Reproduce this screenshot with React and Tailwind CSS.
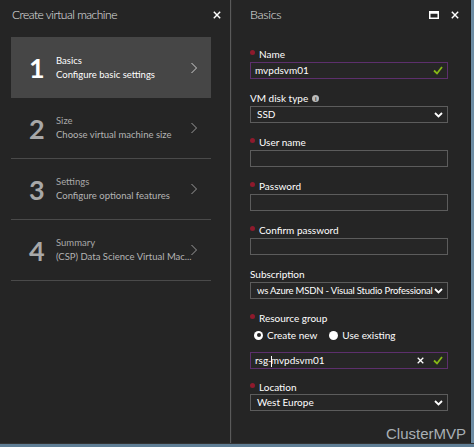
import React from "react";

const F = "font-['Lato',sans-serif]";

function Chevron({ className = "" }) {
  return (
    <svg width="8" height="12" viewBox="0 0 8 12" className={className}>
      <path d="M1.5 1 L6.5 6 L1.5 11" fill="none" stroke="currentColor" strokeWidth="1" />
    </svg>
  );
}

function Close({ size = 9 }) {
  return (
    <svg width={size} height={size} viewBox="0 0 10 10">
      <path d="M1 1 L9 9 M9 1 L1 9" stroke="currentColor" strokeWidth="1.8" />
    </svg>
  );
}

function Check() {
  return (
    <svg width="10" height="9" viewBox="0 0 10 9">
      <path d="M1 4.5 L4 7.5 L9 1" fill="none" stroke="#86b817" strokeWidth="1.8" />
    </svg>
  );
}

function Down() {
  return (
    <svg width="9" height="6" viewBox="0 0 9 6">
      <path d="M1 1 L4.5 4.5 L8 1" fill="none" stroke="#ffffff" strokeWidth="1.8" />
    </svg>
  );
}

function Step({ n, title, sub, active }) {
  return (
    <div
      className={`h-[61px] flex items-center ${
        active ? "bg-[#464646]" : "border-b border-[#4a4a4a]"
      }`}
    >
      <div
        className={`w-[45px] shrink-0 pl-[18px] text-[27px] font-bold leading-none ${
          active ? "text-white" : "text-[#a8a8a8]"
        }`}
      >
        {n}
      </div>
      <div className="flex-1 min-w-0 flex flex-col gap-[2px] whitespace-nowrap">
        <div className={`text-[9.5px] leading-[12px] ${active ? "text-white" : "text-[#a8a8a8]"}`}>{title}</div>
        <div className={`text-[9.5px] leading-[12px] ${active ? "text-white" : "text-[#b4b4b4]"}`}>{sub}</div>
      </div>
      <div className={`shrink-0 pl-[4px] pr-[13px] ${active ? "text-[#cfcfcf]" : "text-[#9a9a9a]"}`}>
        <Chevron />
      </div>
    </div>
  );
}

function Label({ children, req, info }) {
  return (
    <div className="h-[14px] flex items-center text-[10px] text-white leading-[14px]">
      {req ? (
        <span className="w-[9px] flex items-center">
          <span className="w-[5px] h-[5px] rounded-full bg-[#8e1a2c] inline-block -translate-y-[2px]" />
        </span>
      ) : null}
      <span>{children}</span>
      {info ? (
        <span className="ml-[4px] w-[7px] h-[7px] rounded-full bg-[#bbbbbb] text-[#252525] text-[6px] leading-[7px] font-bold flex items-center justify-center">
          i
        </span>
      ) : null}
    </div>
  );
}

function Input({ value, valid, clear, purple, select, textClass = "text-[10px]" }) {
  return (
    <div
      className={`h-[17px] w-[198px] flex items-center border ${
        purple ? "border-[#5d2f6d]" : "border-[#5c5c5c]"
      } bg-[#262626] ${select ? "pl-[6px]" : "pl-[4px]"} pr-[4px] overflow-hidden`}
    >
      <div className={`flex-1 min-w-0 ${textClass} text-white leading-[15px] whitespace-nowrap`}>{value}</div>
      {clear ? (
        <span className="text-white mr-[9px] flex items-center">
          <Close size={7} />
        </span>
      ) : null}
      {valid ? <Check /> : null}
      {select ? <span className="ml-[4px] flex items-center"><Down /></span> : null}
    </div>
  );
}

export default function App() {
  return (
    <div className={`w-[474px] h-[447px] bg-[#252525] flex flex-col overflow-hidden relative ${F}`}>
      <div className="flex flex-1 min-h-0">
        {/* Left blade */}
        <div className="w-[230px] flex flex-col">
          <div className="h-[30px] flex items-center justify-between pl-[12px] pr-[9px]">
            <div className="text-[12px] font-light tracking-[-0.5px] text-[#e6e6e6]">Create virtual machine</div>
            <span className="text-white">
              <Close size={8} />
            </span>
          </div>
          <div className="mt-[7px] ml-[11px] w-[200px] flex flex-col">
            <Step n="1" title="Basics" sub="Configure basic settings" active />
            <Step n="2" title="Size" sub="Choose virtual machine size" />
            <Step n="3" title="Settings" sub="Configure optional features" />
            <Step n="4" title="Summary" sub="(CSP) Data Science Virtual Mac..." />
          </div>
        </div>
        <div className="w-[1px] bg-[#5a5a5a]" />
        <div className="w-[1px] bg-[#2c2c2c]" />
        {/* Right blade */}
        <div className="flex-1 flex flex-col">
          <div className="h-[30px] flex items-center justify-between pl-[18px] pr-[11px]">
            <div className="text-[12.5px] font-light tracking-[-0.3px] text-[#e6e6e6]">Basics</div>
            <div className="flex items-center gap-[12px] text-white">
              <svg width="10" height="8" viewBox="0 0 10 8">
                <rect x="0.75" y="0.75" width="8.5" height="6.5" fill="none" stroke="#fff" strokeWidth="1.5" />
                <rect x="0.75" y="0.75" width="8.5" height="2" fill="#fff" />
              </svg>
              <Close size={8} />
            </div>
          </div>
          <div className="pl-[18px] flex flex-col mt-[17px]">
            <Label req>Name</Label>
            <div className="mt-[1px]"><Input value="mvpdsvm01" valid purple /></div>

            <div className="mt-[12px]"><Label info>VM disk type</Label></div>
            <div className="mt-[1px]"><Input value="SSD" select /></div>

            <div className="mt-[12px]"><Label req>User name</Label></div>
            <div className="mt-[1px]"><Input value="" /></div>

            <div className="mt-[12px]"><Label req>Password</Label></div>
            <div className="mt-[1px]"><Input value="" /></div>

            <div className="mt-[12px]"><Label req>Confirm password</Label></div>
            <div className="mt-[1px]"><Input value="" /></div>

            <div className="mt-[12px]"><Label>Subscription</Label></div>
            <div className="mt-[1px]">
              <Input
                value="ws Azure MSDN - Visual Studio Professional"
                select
                textClass="text-[9.5px] tracking-[-0.2px]"
              />
            </div>

            <div className="mt-[12px]"><Label req>Resource group</Label></div>
            <div className="mt-[3px] h-[14px] flex items-center text-[10px] text-white leading-[14px]">
              <span className="w-[9px] h-[9px] rounded-full bg-white flex items-center justify-center ml-[4px]">
                <span className="w-[4px] h-[4px] rounded-full bg-[#252525]" />
              </span>
              <span className="ml-[4px]">Create new</span>
              <span className="w-[9px] h-[9px] rounded-full bg-white ml-[12px]" />
              <span className="ml-[4px]">Use existing</span>
            </div>
            <div className="mt-[10px]">
              <Input
                value={
                  <span>
                    rsg-<span className="inline-block w-[1px] h-[11px] bg-white align-middle -mx-[1px]" />mvpdsvm01
                  </span>
                }
                clear
                valid
                purple
              />
            </div>

            <div className="mt-[11px]"><Label req>Location</Label></div>
            <div className="mt-[0px]"><Input value="West Europe" select /></div>
          </div>
        </div>
        <div className="w-[1px] bg-[#1c1c1c]" />
        <div className="w-[3px] bg-[#6d8ca3]" />
      </div>
      <div className="h-[1px] bg-[#333]" />
      <div className="h-[3px] bg-[#5f7e95]" />
      <div className="absolute right-[8px] bottom-[6px] text-[15px] text-[#a9b0b5] font-['Liberation_Sans',sans-serif] leading-none">
        ClusterMVP
      </div>
    </div>
  );
}
